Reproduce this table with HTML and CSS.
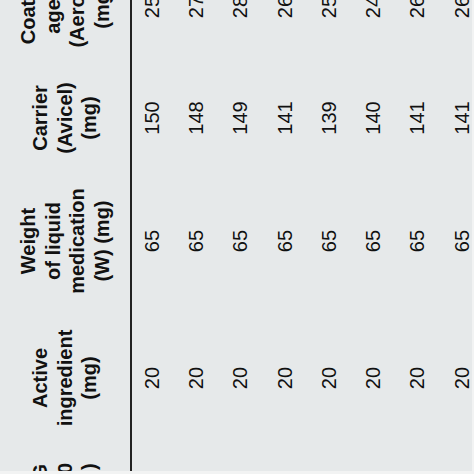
FILE: index.html
```html
<!DOCTYPE html>
<html>
<head>
<meta charset="utf-8">
<link rel="stylesheet" href="styles.css">
</head>
<body>
<div class="viewport">
  <div class="sheet">
    <div class="table">
      <div class="row head">
        <div class="cell">PEG<br>4000<br>(mg)</div>
        <div class="cell">Active<br>ingredient<br>(mg)</div>
        <div class="cell">Weight<br>of liquid<br>medication<br>(W) (mg)</div>
        <div class="cell">Carrier<br>(Avicel)<br>(mg)</div>
        <div class="cell">Coating<br>agent<br>(Aerosil)<br>(mg)</div>
      </div>
      <div class="row data"><div class="cell"></div><div class="cell">20</div><div class="cell">65</div><div class="cell">150</div><div class="cell">25</div></div>
      <div class="row data"><div class="cell"></div><div class="cell">20</div><div class="cell">65</div><div class="cell">148</div><div class="cell">27</div></div>
      <div class="row data"><div class="cell"></div><div class="cell">20</div><div class="cell">65</div><div class="cell">149</div><div class="cell">28</div></div>
      <div class="row data"><div class="cell"></div><div class="cell">20</div><div class="cell">65</div><div class="cell">141</div><div class="cell">26</div></div>
      <div class="row data"><div class="cell"></div><div class="cell">20</div><div class="cell">65</div><div class="cell">139</div><div class="cell">25</div></div>
      <div class="row data"><div class="cell"></div><div class="cell">20</div><div class="cell">65</div><div class="cell">140</div><div class="cell">24</div></div>
      <div class="row data"><div class="cell"></div><div class="cell">20</div><div class="cell">65</div><div class="cell">141</div><div class="cell">26</div></div>
      <div class="row data"><div class="cell"></div><div class="cell">20</div><div class="cell">65</div><div class="cell">141</div><div class="cell">26</div></div>
    </div>
  </div>
</div>
</body>
</html>
```
FILE: styles.css
```css
html, body {
  margin: 0;
  padding: 0;
  overflow: hidden;
  background: #f2f3f3;
}
.viewport {
  width: 474px;
  height: 474px;
  overflow: hidden;
  background: #f2f3f3;
}
.sheet {
  width: 472px;
  height: 471px;
  overflow: hidden;
  background: #e6e9ea;
}
.table {
  width: 574px;
  transform-origin: 0 0;
  transform: translate(0, 524px) rotate(-90deg);
  font-family: "Liberation Sans", Arial, sans-serif;
  color: #111;
}
.row {
  display: grid;
  grid-template-columns: 78px 136px 138px 108px 114px;
}
.head {
  height: 130px;
  border-bottom: 2px solid #222;
  font-weight: bold;
  font-size: 20px;
  line-height: 24.5px;
  align-items: center;
  text-align: center;
}
.data {
  height: 44.3px;
  font-size: 20px;
}
.data .cell {
  display: flex;
  align-items: center;
  justify-content: center;
  padding-bottom: 4px;
}
```
